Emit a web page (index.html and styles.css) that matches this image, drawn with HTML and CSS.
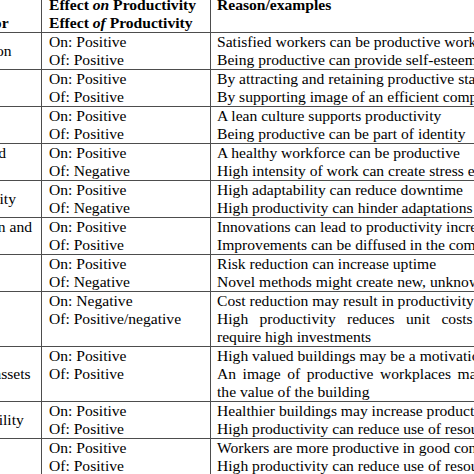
FILE: index.html
```html
<!DOCTYPE html>
<html lang="en">
<head>
<meta charset="utf-8">
<title>Productivity factors</title>
<link rel="stylesheet" href="styles.css">
</head>
<body>
<div class="page">
  <div class="table">
    <div class="cell c1 head">Key factor</div>
    <div class="cell c2 head">Effect <i>on</i> Productivity<br>Effect <i>of</i> Productivity</div>
    <div class="cell c3 head">Reason/examples</div>

    <div class="cell c1">Satisfaction</div>
    <div class="cell c2">On: Positive<br>Of: Positive</div>
    <div class="cell c3"><p class="p">Satisfied workers can be productive workers</p><p class="p">Being productive can provide self-esteem</p></div>

    <div class="cell c1">Image</div>
    <div class="cell c2">On: Positive<br>Of: Positive</div>
    <div class="cell c3"><p class="p">By attracting and retaining productive staff</p><p class="p">By supporting image of an efficient company</p></div>

    <div class="cell c1">Culture</div>
    <div class="cell c2">On: Positive<br>Of: Positive</div>
    <div class="cell c3"><p class="p">A lean culture supports productivity</p><p class="p">Being productive can be part of identity</p></div>

    <div class="cell c1">Health and safety</div>
    <div class="cell c2">On: Positive<br>Of: Negative</div>
    <div class="cell c3"><p class="p">A healthy workforce can be productive</p><p class="p">High intensity of work can create stress effects</p></div>

    <div class="cell c1">Adaptability</div>
    <div class="cell c2">On: Positive<br>Of: Negative</div>
    <div class="cell c3"><p class="p">High adaptability can reduce downtime</p><p class="p">High productivity can hinder adaptations</p></div>

    <div class="cell c1">Innovation and learning</div>
    <div class="cell c2">On: Positive<br>Of: Positive</div>
    <div class="cell c3"><p class="p">Innovations can lead to productivity increase</p><p class="p">Improvements can be diffused in the company</p></div>

    <div class="cell c1">Risk</div>
    <div class="cell c2">On: Positive<br>Of: Negative</div>
    <div class="cell c3"><p class="p">Risk reduction can increase uptime</p><p class="p">Novel methods might create new, unknown risks</p></div>

    <div class="cell c1">Costs</div>
    <div class="cell c2">On: Negative<br>Of: Positive/negative</div>
    <div class="cell c3"><p class="p">Cost reduction may result in productivity loss</p><p class="p">High productivity reduces unit costs but may require high investments</p></div>

    <div class="cell c1">Value of assets</div>
    <div class="cell c2">On: Positive<br>Of: Positive</div>
    <div class="cell c3"><p class="p">High valued buildings may be a motivation</p><p class="p">An image of productive workplaces may increase the value of the building</p></div>

    <div class="cell c1">Sustainability</div>
    <div class="cell c2">On: Positive<br>Of: Positive</div>
    <div class="cell c3"><p class="p">Healthier buildings may increase productivity</p><p class="p">High productivity can reduce use of resources</p></div>

    <div class="cell c1">Comfort</div>
    <div class="cell c2">On: Positive<br>Of: Positive</div>
    <div class="cell c3"><p class="p">Workers are more productive in good conditions</p><p class="p">High productivity can reduce use of resources</p></div>
  </div>
</div>
</body>
</html>
```
FILE: styles.css
```css
html, body {
  margin: 0;
  padding: 0;
  background: #ffffff;
}

.page {
  width: 474px;
  height: 474px;
  overflow: hidden;
}

.table {
  display: grid;
  grid-template-columns: 111px 169px 339px;
  margin: -4px 0 0 -69px;
  font-family: "Liberation Serif", "Times New Roman", serif;
  font-size: 15.6px;
  line-height: 18px;
  color: #000000;
}

.cell {
  box-sizing: border-box;
  border-right: 1px solid #4d4d4d;
  border-bottom: 1px solid #4d4d4d;
  padding: 0 7px;
}

.c1 {
  display: flex;
  align-items: center;
  padding: 0 5px 0 7px;
}

.c3 {
  padding: 0 7px 0 6px;
}

.head {
  font-weight: bold;
}

.head.c1 {
  align-items: flex-end;
}

.p {
  margin: 0;
  text-align: justify;
}
```
